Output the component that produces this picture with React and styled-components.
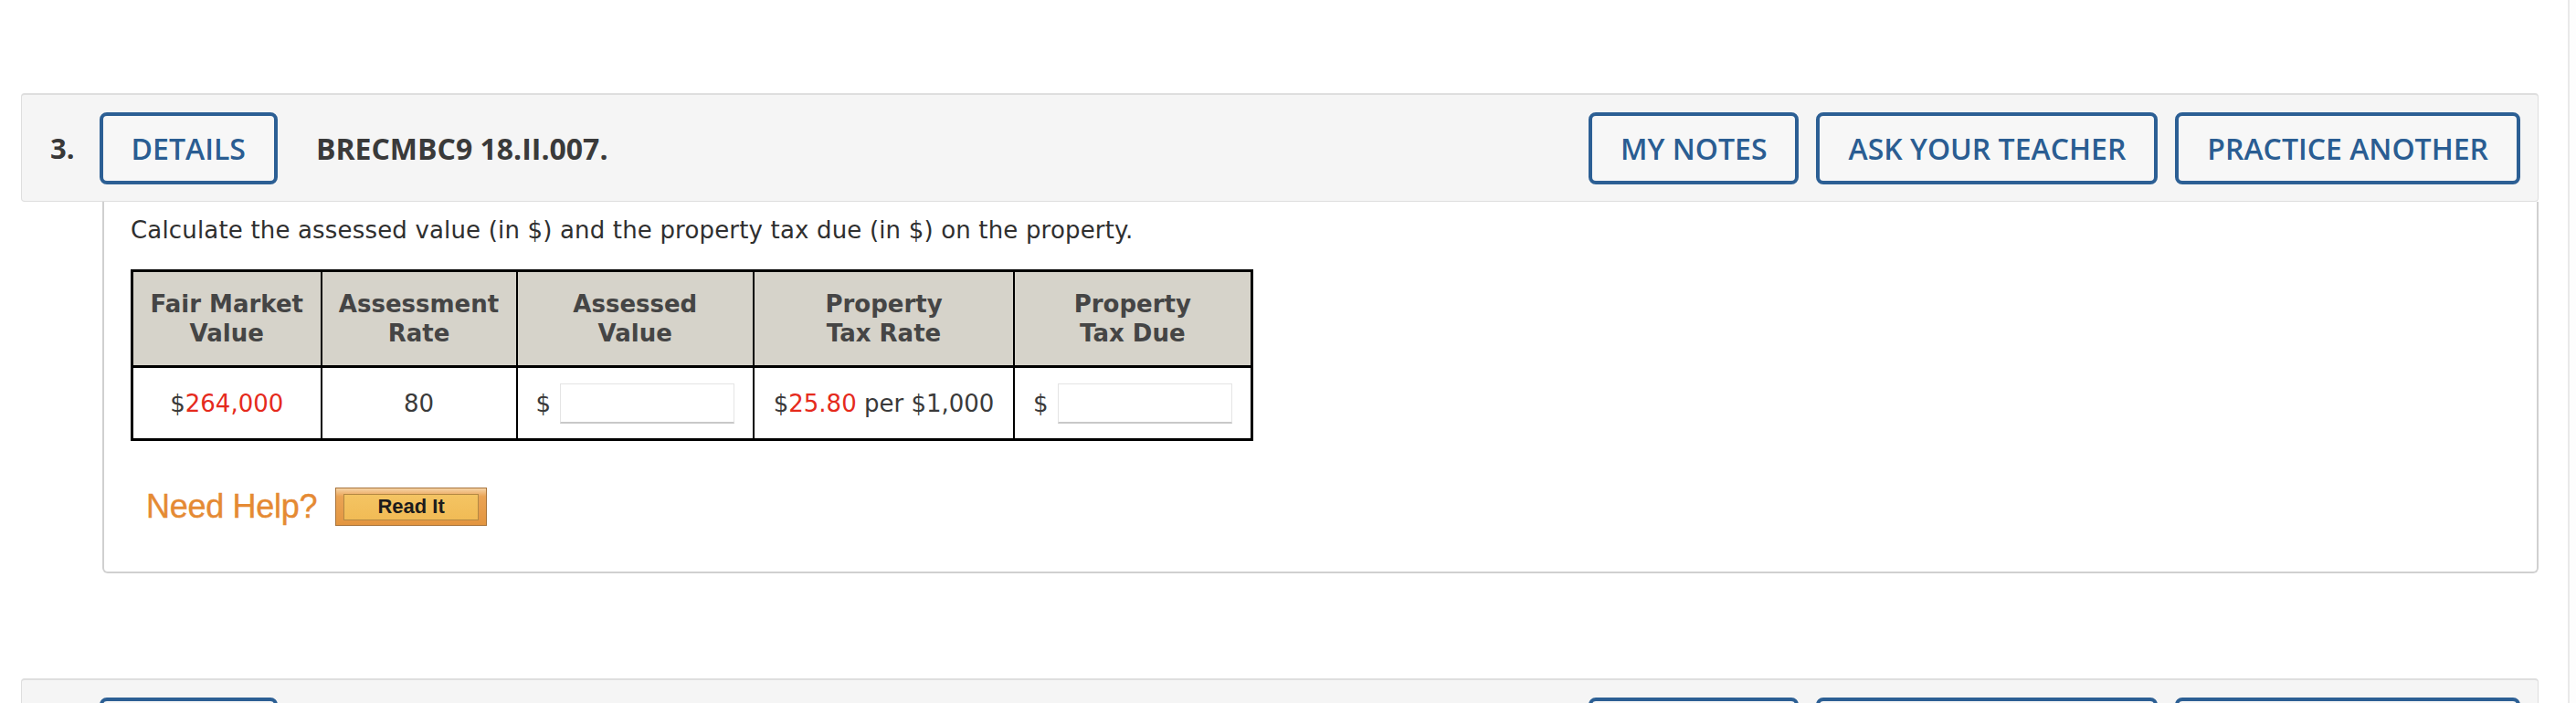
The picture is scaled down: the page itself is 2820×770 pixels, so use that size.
import React from "react";
import styled, { createGlobalStyle } from "styled-components";

const GlobalStyle = createGlobalStyle`
  html, body {
    margin: 0;
    padding: 0;
    background: #ffffff;
    overflow: hidden;
  }
  * { box-sizing: border-box; }
`;

const Page = styled.div`
  display: flex;
  height: 770px;
  overflow: hidden;
  background: #ffffff;
`;

const Main = styled.main`
  flex: 1;
  padding: 102px 32px 0 23px;
`;

const ScrollTrack = styled.div`
  width: 9px;
  flex: none;
  border-left: 2px solid #e9e9e9;
  background: #fdfdfd;
`;

const Question = styled.section`
  display: flex;
  flex-direction: column;
  margin-bottom: 115px;
`;

const Header = styled.div`
  display: flex;
  align-items: center;
  height: 119px;
  padding: 0 19px 0 31px;
  background: #f5f5f5;
  border: 1px solid #dedede;
  border-top-width: 2px;
  border-radius: 4px;
  font-family: "Open Sans", "Liberation Sans", sans-serif;
`;

const Number = styled.span`
  font-size: 31px;
  font-weight: 700;
  color: #383838;
  margin-right: 27px;
`;

const Title = styled.span`
  font-size: 32px;
  font-weight: 700;
  color: #3a3a3a;
  margin-left: 42px;
  flex: 1;
`;

const OutlineButton = styled.button`
  height: 79px;
  padding: 0 31px;
  border: 4px solid #2c5f94;
  border-radius: 8px;
  background: #f7f7f7;
  color: #2a5d92;
  font-family: "Open Sans", "Liberation Sans", sans-serif;
  font-size: 32px;
  font-weight: 600;
  text-transform: uppercase;
  white-space: nowrap;
  cursor: pointer;
`;

const Actions = styled.div`
  display: flex;
  gap: 19px;
`;

const Body = styled.div`
  margin-left: 89px;
  padding: 14px 29px 50px;
  border: 2px solid #d0d0d0;
  border-top: none;
  border-radius: 0 0 6px 6px;
  font-family: "DejaVu Sans", Verdana, sans-serif;
  color: #333333;
`;

const Prompt = styled.p`
  margin: 0 0 26px;
  font-size: 26px;
  line-height: 34px;
  letter-spacing: 0.17px;
  color: #2f2f2f;
`;

const Table = styled.table`
  border-collapse: collapse;
  border: 3px solid #000;
  font-size: 26px;
`;

const Th = styled.th`
  width: ${(p) => p.$w}px;
  padding: 19px 8px;
  background: #d6d3ca;
  border: 2px solid #000;
  border-bottom-width: 3px;
  font-weight: 700;
  line-height: 32px;
  color: #454545;
  text-align: center;
  vertical-align: middle;
`;

const Td = styled.td`
  height: 80px;
  padding: 0 ${(p) => (p.$input ? "20px" : "12px")};
  border: 2px solid #000;
  text-align: ${(p) => (p.$input ? "left" : "center")};
  vertical-align: middle;
  color: #3a3a3a;
  white-space: nowrap;
`;

const InputWrap = styled.div`
  display: flex;
  align-items: center;
  gap: 10px;
`;

const Answer = styled.input`
  width: 191px;
  height: 44px;
  border: 1px solid #e4e4e4;
  border-bottom: 2px solid #c8c8c8;
  background: #fff;
  outline: none;
`;

const Red = styled.span`
  color: #e52a1c;
`;

const HelpRow = styled.div`
  display: flex;
  align-items: center;
  margin: 51px 0 0 17px;
  gap: 20px;
`;

const NeedHelp = styled.span`
  font-family: "Liberation Sans", Arial, sans-serif;
  font-size: 36px;
  color: #e58a33;
  letter-spacing: -0.3px;
  -webkit-text-stroke: 0.4px #e58a33;
`;

const ReadIt = styled.button`
  display: flex;
  align-items: center;
  justify-content: center;
  width: 166px;
  height: 42px;
  padding: 0 8px;
  border: 1px solid #a8733a;
  background: linear-gradient(#f6d3a6 0%, #eaa455 22%, #e39540 100%);
  cursor: pointer;
`;

const ReadItInner = styled.span`
  display: flex;
  align-items: center;
  justify-content: center;
  width: 100%;
  height: 29px;
  border: 1px solid #b38843;
  background: linear-gradient(#f4c463, #f1bb55);
  font-family: "Liberation Sans", Arial, sans-serif;
  font-weight: 700;
  font-size: 22px;
  color: #1c1c1c;
`;

const columns = [
  { w: 207, label: ["Fair Market", "Value"] },
  { w: 214, label: ["Assessment", "Rate"] },
  { w: 259, label: ["Assessed", "Value"] },
  { w: 285, label: ["Property", "Tax Rate"] },
  { w: 257, label: ["Property", "Tax Due"] },
];

function QuestionHeader({ number, code }) {
  return (
    <Header>
      <Number>{number}.</Number>
      <OutlineButton>Details</OutlineButton>
      <Title>{code}</Title>
      <Actions>
        <OutlineButton>My Notes</OutlineButton>
        <OutlineButton>Ask Your Teacher</OutlineButton>
        <OutlineButton>Practice Another</OutlineButton>
      </Actions>
    </Header>
  );
}

export default function App() {
  return (
    <Page>
      <GlobalStyle />
      <Main>
        <Question>
          <QuestionHeader number={3} code="BRECMBC9 18.II.007." />
          <Body>
            <Prompt>
              Calculate the assessed value (in $) and the property tax due (in $) on the property.
            </Prompt>
            <Table>
              <thead>
                <tr>
                  {columns.map((c) => (
                    <Th key={c.label.join()} $w={c.w}>
                      {c.label[0]}
                      <br />
                      {c.label[1]}
                    </Th>
                  ))}
                </tr>
              </thead>
              <tbody>
                <tr>
                  <Td>
                    $<Red>264,000</Red>
                  </Td>
                  <Td>80</Td>
                  <Td $input>
                    <InputWrap>
                      $<Answer type="text" aria-label="Assessed value" />
                    </InputWrap>
                  </Td>
                  <Td>
                    $<Red>25.80</Red> per $1,000
                  </Td>
                  <Td $input>
                    <InputWrap>
                      $<Answer type="text" aria-label="Property tax due" />
                    </InputWrap>
                  </Td>
                </tr>
              </tbody>
            </Table>
            <HelpRow>
              <NeedHelp>Need Help?</NeedHelp>
              <ReadIt>
                <ReadItInner>Read It</ReadItInner>
              </ReadIt>
            </HelpRow>
          </Body>
        </Question>
        <Question>
          <QuestionHeader number={4} code="BRECMBC9 18.II.008." />
        </Question>
      </Main>
      <ScrollTrack />
    </Page>
  );
}
